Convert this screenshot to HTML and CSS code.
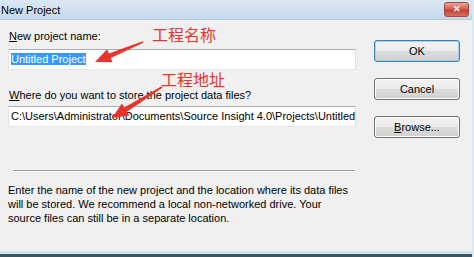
FILE: index.html
```html
<!DOCTYPE html>
<html lang="en">
<head>
    <meta charset="UTF-8">
    <title>New Project</title>
    <link rel="stylesheet" href="styles.css">
</head>
<body>
    <div class="window">
        <div class="titlebar">
            <span class="title">New Project</span>
            <span class="close-btn">&#x2715;</span>
        </div>

        <div class="dialog">
            <div class="fields">
                <div class="field-label"><u>N</u>ew project name:</div>
                <div class="textbox"><span class="selected">Untitled Project</span></div>

                <div class="field-label second"><u>W</u>here do you want to store the project data files?</div>
                <div class="textbox">C:\Users\Administrator\Documents\Source Insight 4.0\Projects\Untitled</div>

                <div class="separator"></div>

                <p class="hint">
                    Enter the name of the new project and the location where its data files
                    will be stored. We recommend a local non-networked drive. Your
                    source files can still be in a separate location.
                </p>
            </div>

            <div class="buttons">
                <button class="btn default">OK</button>
                <button class="btn">Cancel</button>
                <button class="btn"><u>B</u>rowse...</button>
            </div>
        </div>

        <div class="frame-bottom"></div>
    </div>

    <!-- annotations drawn over the dialog -->
    <div class="note note-name">工程名称</div>
    <div class="note note-path">工程地址</div>
    <svg class="arrows" width="474" height="257" viewBox="0 0 474 257">
        <polygon points="142.7,41.3 108.8,53.5 107.1,49.3 95,62 112.5,62.3 110.8,58.1 143.3,42.7" />
        <polygon points="161.6,86.3 124.3,107.5 121.9,103.6 112,118 129.3,115.6 126.9,111.7 162.4,87.7" />
    </svg>
</body>
</html>
```

FILE: styles.css
```css
body {
    margin: 0;
    width: 474px;
    height: 257px;
    overflow: hidden;
    position: relative;
    background-color: #f0f0f0;
    font-family: "Liberation Sans", Arial, sans-serif;
    font-size: 11px;
    color: #000;
}

.window {
    display: flex;
    flex-direction: column;
    height: 257px;
    border-right: 2px solid #dce8f2;
    box-sizing: border-box;
}

.titlebar {
    height: 20px;
    flex: none;
    display: flex;
    align-items: center;
    justify-content: space-between;
    padding: 0 3px 0 1px;
    background: linear-gradient(#dbe8f4, #c6d9ed);
    border-bottom: 1px solid #b5c9de;
    box-sizing: border-box;
}

.title {
    font-size: 11px;
    color: #000;
}

.close-btn {
    width: 25px;
    height: 15px;
    margin-top: -1px;
    border-radius: 3px;
    border: 1px solid #a34a40;
    background: linear-gradient(#e9a89c, #d0574a 50%, #c13b2d 51%, #d8705f);
    color: #fff;
    font-size: 9px;
    font-weight: bold;
    line-height: 13px;
    text-align: center;
    box-sizing: border-box;
}

.dialog {
    flex: 1;
    display: flex;
    align-items: flex-start;
    gap: 18px;
    padding: 9px 0 0 8px;
}

.fields {
    width: 348px;
    flex: none;
}

.field-label {
    line-height: 14px;
    padding-left: 1px;
    margin-bottom: 6px;
}

.field-label.second {
    margin-top: 18px;
    margin-bottom: 4px;
}

.textbox {
    height: 21px;
    border: 1px solid #abadb3;
    border-color: #abadb3 #dbdfe6 #e3e9ef #e2e3ea;
    background-color: #fff;
    box-sizing: border-box;
    padding: 2px 0 0 2px;
    line-height: 14px;
    white-space: nowrap;
    overflow: hidden;
}

.selected {
    background-color: #3399ff;
    color: #fff;
}

.separator {
    margin: 43px 1px 0 5px;
    height: 1px;
    background-color: #a0a0a0;
    border-bottom: 1px solid #fff;
}

.hint {
    margin: 11px 0 0 0;
    line-height: 14px;
    width: 346px;
}

.buttons {
    display: flex;
    flex-direction: column;
    gap: 16px;
    padding-top: 11px;
}

.btn {
    width: 86px;
    height: 22px;
    padding: 0;
    font-family: "Liberation Sans", Arial, sans-serif;
    font-size: 11px;
    color: #000;
    border: 1px solid #707070;
    border-radius: 3px;
    background: linear-gradient(#f2f2f2, #ebebeb 50%, #dddddd 51%, #cfcfcf);
    box-shadow: inset 0 0 0 1px #fcfcfc;
}

.btn.default {
    border-color: #3c7fb1;
    box-shadow: inset 0 0 0 1px #9fd5f2;
}

.frame-bottom {
    height: 6px;
    flex: none;
    border-top: 3px solid #cfe2ee;
    background-color: #3b5660;
    box-sizing: border-box;
}

.note {
    position: absolute;
    font-family: "Noto Sans CJK SC", sans-serif;
    font-size: 16px;
    line-height: 15px;
    color: #e6352b;
}

.note-name {
    left: 152px;
    top: 27px;
}

.note-path {
    left: 161px;
    top: 72px;
}

.arrows {
    position: absolute;
    left: 0;
    top: 0;
    fill: #e6352b;
}
```
